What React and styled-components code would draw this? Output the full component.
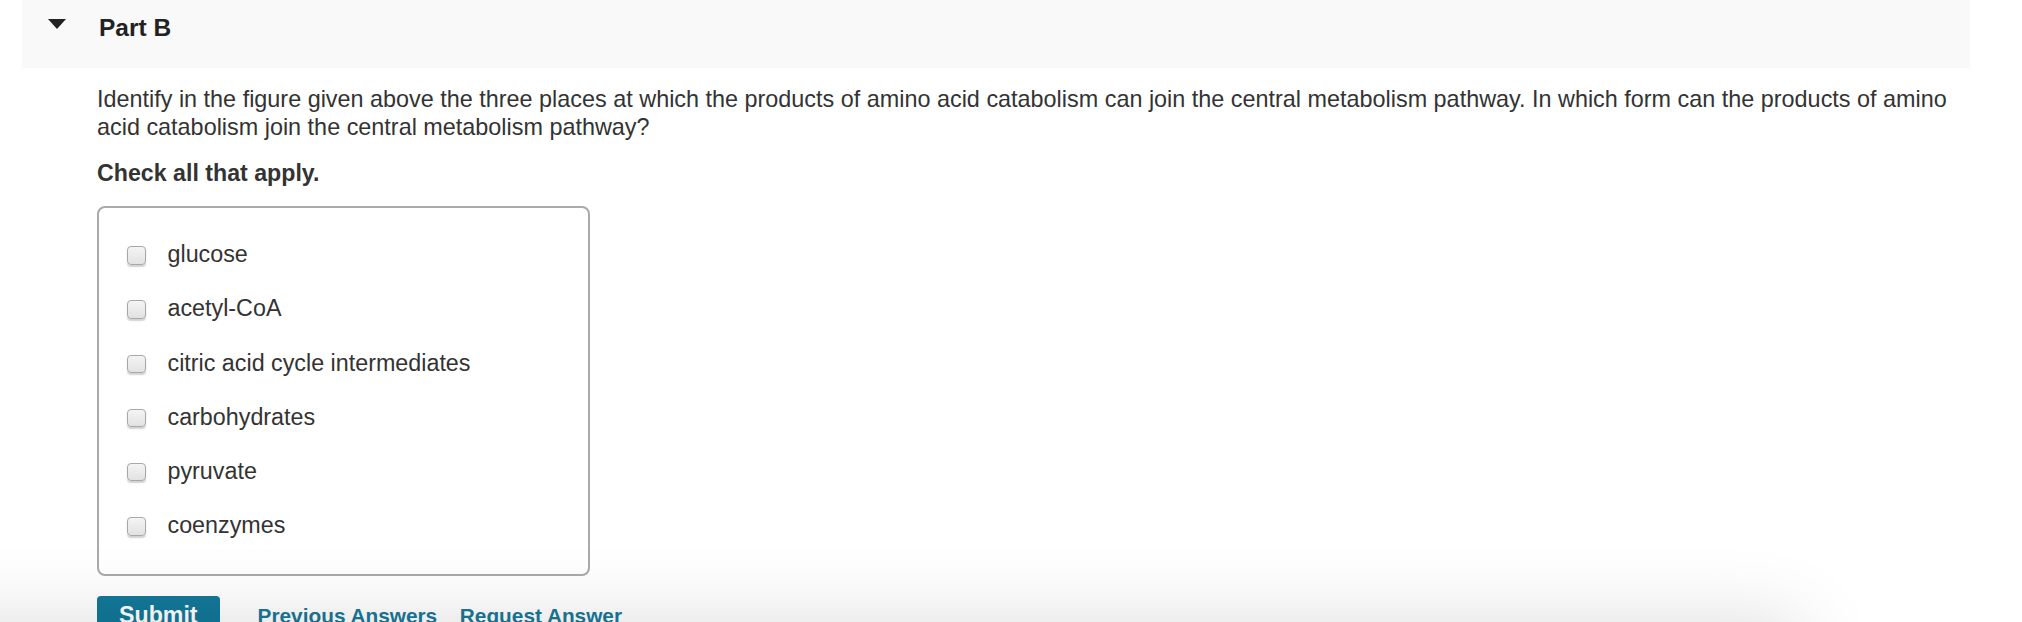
import React from "react";
import styled, { createGlobalStyle } from "styled-components";

const Global = createGlobalStyle`
  html, body { margin: 0; padding: 0; background: #ffffff; }
  body { font-family: "Liberation Sans", Arial, Helvetica, sans-serif; color: #333333; overflow: hidden; }
`;

const Page = styled.div`
  margin-left: 22px;
  width: 1948px;
`;

const PartHeader = styled.div`
  display: flex;
  align-items: flex-start;
  height: 68px;
  background: #f9f9f9;
  padding: 16px 0 0 26px;
  box-sizing: border-box;
`;

const Caret = styled.span`
  width: 0;
  height: 0;
  border-left: 9.5px solid transparent;
  border-right: 9.5px solid transparent;
  border-top: 10px solid #222222;
  margin-top: 3px;
  margin-right: 33px;
`;

const PartTitle = styled.h2`
  margin: 0;
  font-size: 24.5px;
  font-weight: bold;
  color: #222222;
  line-height: 24px;
`;

const Body = styled.div`
  padding: 17px 10px 0 75px;
`;

const Prompt = styled.p`
  margin: 0;
  font-size: 23.4px;
  line-height: 28.4px;
  color: #333333;
`;

const Instruction = styled.p`
  margin: 17px 0 0 0;
  font-size: 23.2px;
  line-height: 28.4px;
  font-weight: bold;
  color: #333333;
`;

const OptionBox = styled.div`
  margin-top: 19px;
  width: 493px;
  box-sizing: border-box;
  border: 2px solid #aaaaaa;
  border-radius: 8px;
  padding: 32px 20px 34px 28px;
  display: flex;
  flex-direction: column;
  gap: 25.8px;
`;

const Option = styled.label`
  display: flex;
  align-items: center;
  gap: 22px;
  font-size: 23.3px;
  line-height: 28.4px;
  color: #333333;
`;

const Box = styled.span`
  width: 18.5px;
  height: 18.5px;
  box-sizing: border-box;
  border: 1.5px solid #a8a8a8;
  border-radius: 4px;
  background: linear-gradient(#f4f4f4, #e2e2e2);
  box-shadow: 0 1.5px 1.5px rgba(0, 0, 0, 0.18);
  margin-top: 2px;
  flex: none;
`;

const Actions = styled.div`
  margin-top: 20px;
  display: flex;
  align-items: center;
`;

const SubmitButton = styled.button`
  height: 44px;
  width: 122.6px;
  border: none;
  border-radius: 4px;
  background: #13789a;
  color: #ffffff;
  font-family: "Liberation Sans", Arial, sans-serif;
  font-size: 23.2px;
  font-weight: bold;
  padding: 0 0 6px 0;
  margin-right: 38px;
  line-height: 36px;
`;

const LinkText = styled.a`
  font-size: 20.8px;
  font-weight: bold;
  color: #1a7899;
  text-decoration: none;
  margin-right: 22.7px;
  margin-top: -4px;
`;

const BottomShade = styled.div`
  position: fixed;
  left: -200px;
  top: 622px;
  width: 2000px;
  height: 200px;
  background: #ffffff;
  box-shadow: 0 0 80px rgba(0, 0, 0, 0.14);
  pointer-events: none;
`;

const options = [
  "glucose",
  "acetyl-CoA",
  "citric acid cycle intermediates",
  "carbohydrates",
  "pyruvate",
  "coenzymes",
];

export default function App() {
  return (
    <>
      <Global />
      <Page>
        <PartHeader>
          <Caret />
          <PartTitle>Part B</PartTitle>
        </PartHeader>
        <Body>
          <Prompt>
            Identify in the figure given above the three places at which the products of amino acid
            catabolism can join the central metabolism pathway. In which form can the products of amino
            acid catabolism join the central metabolism pathway?
          </Prompt>
          <Instruction>Check all that apply.</Instruction>
          <OptionBox>
            {options.map((o) => (
              <Option key={o}>
                <Box />
                {o}
              </Option>
            ))}
          </OptionBox>
          <Actions>
            <SubmitButton>Submit</SubmitButton>
            <LinkText href="#">Previous Answers</LinkText>
            <LinkText href="#">Request Answer</LinkText>
          </Actions>
        </Body>
      </Page>
      <BottomShade />
    </>
  );
}
